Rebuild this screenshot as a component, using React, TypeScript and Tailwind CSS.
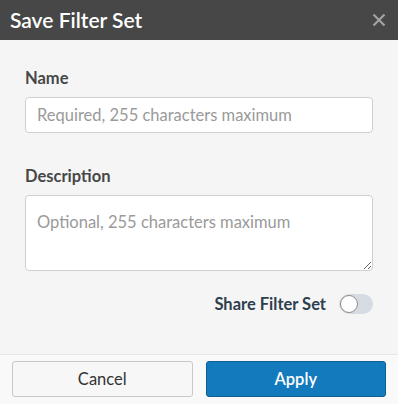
import { useState } from 'react';

export default function App() {
  const [name, setName] = useState('');
  const [description, setDescription] = useState('');
  const [shared, setShared] = useState(false);

  return (
    <div className="flex h-[404px] w-[398px] flex-col bg-[#f5f5f5] font-['Lato',sans-serif]">
      <div className="flex h-[40px] items-center justify-between bg-[#474747] pl-[10px] pr-[12px]">
        <h2 className="text-[21px] font-semibold leading-[28px] text-white">Save Filter Set</h2>
        <button type="button" className="text-[#a3a3a3]" aria-label="Close">
          <svg width="14" height="14" viewBox="0 0 14 14">
            <path d="M1.5 1.5 12.5 12.5 M12.5 1.5 1.5 12.5" stroke="currentColor" strokeWidth="2.2" />
          </svg>
        </button>
      </div>

      <div className="flex flex-1 flex-col px-[25px] pt-[26px]">
        <label htmlFor="filter-set-name" className="text-[16.5px] font-bold leading-[24px] text-[#474747]">
          Name
        </label>
        <input
          id="filter-set-name"
          value={name}
          onChange={(event) => setName(event.target.value)}
          placeholder="Required, 255 characters maximum"
          className="mt-[7px] h-[36px] w-full rounded-[4px] border border-[#cfcfcf] bg-white px-[11px] text-[16.5px] text-[#333] placeholder:text-[#9a9a9a] focus:outline-none"
        />

        <label
          htmlFor="filter-set-description"
          className="mt-[31px] text-[16.5px] font-bold leading-[24px] text-[#474747]"
        >
          Description
        </label>
        <textarea
          id="filter-set-description"
          value={description}
          onChange={(event) => setDescription(event.target.value)}
          placeholder="Optional, 255 characters maximum"
          className="mt-[7px] h-[76px] w-full rounded-[4px] border border-[#cfcfcf] bg-white px-[11px] pb-[8px] pt-[14px] text-[16.5px] leading-[24px] text-[#333] placeholder:text-[#9a9a9a] focus:outline-none"
        />

        <div className="mt-[21px] flex items-center justify-end gap-[13px]">
          <span className="text-[16.5px] font-bold leading-[24px] text-[#2d3e4f]">Share Filter Set</span>
          <button
            type="button"
            onClick={() => setShared(!shared)}
            className={`flex h-[20px] w-[34px] items-center rounded-full p-[1px] ${shared ? 'justify-end bg-[#137bbd]' : 'justify-start bg-[#d6dce2]'}`}
          >
            <span className="h-[18px] w-[18px] rounded-full border-[1.5px] border-[#8c8c8c] bg-white" />
          </button>
        </div>
      </div>

      <div className="flex h-[50px] gap-[13px] border-t border-[#e6e6e6] bg-[#f9f9f9] px-[12px] pt-[6px]">
        <button
          type="button"
          className="h-[36px] flex-1 rounded-[3px] border border-[#c8c8c8] bg-[#f7f7f7] text-[16.5px] text-[#333]"
        >
          Cancel
        </button>
        <button
          type="button"
          className="h-[36px] flex-1 rounded-[3px] border border-[#0f5e92] bg-[#137bbd] text-[16.5px] font-semibold text-white"
        >
          Apply
        </button>
      </div>
    </div>
  );
}
